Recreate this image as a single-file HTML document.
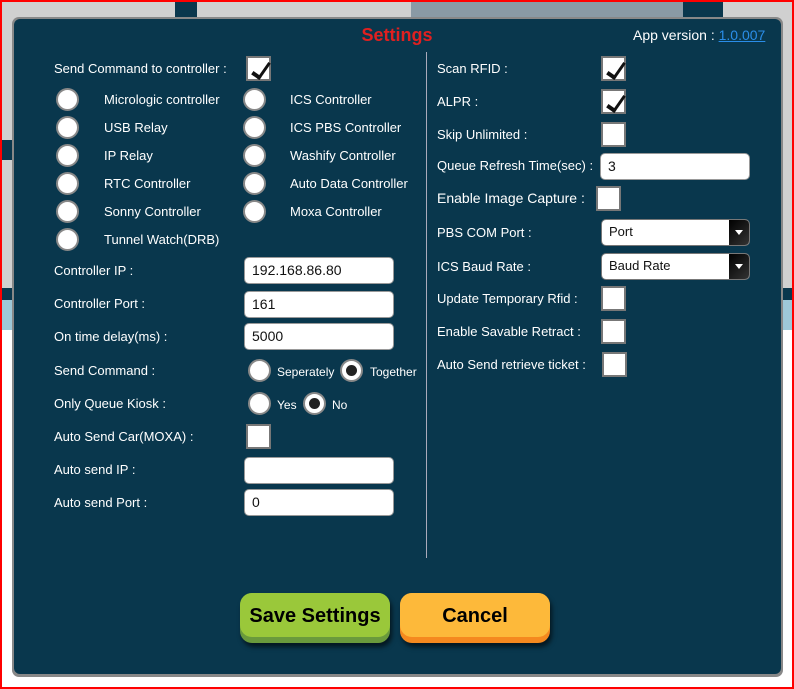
<!DOCTYPE html>
<html><head><meta charset="utf-8"><style>
*{margin:0;padding:0;box-sizing:border-box}
body{width:794px;height:689px;position:relative;overflow:hidden;background:#fff;font-family:"Liberation Sans",sans-serif;color:#fff}
.a{position:absolute}
.l{position:absolute;font-size:13px;line-height:16px;white-space:nowrap;color:#fff;transform:translateY(-7px)}
.s{font-size:12px}
.r{position:absolute;width:23px;height:23px;border-radius:50%;background:#fff;border:2px solid #888;transform:translate(-11px,-11px)}
.r.on::after{content:"";position:absolute;left:4px;top:4px;width:11px;height:11px;border-radius:50%;background:#222}
.c{position:absolute;width:25px;height:25px;background:#fff;border:2px solid #777}
.c.on::after{content:"";position:absolute;left:8px;top:1px;width:7px;height:16px;border:solid #111;border-width:0 3px 4px 0;transform:rotate(35deg)}
.i{position:absolute;background:#fff;border:1px solid #999;border-radius:5px;color:#111;font-size:14px;line-height:24px;padding-left:7px}
.sel{position:absolute;background:#fff;border:1px solid #777;border-radius:5px;color:#111;font-size:13px;line-height:24px;padding-left:7px;overflow:hidden}
.sel::after{content:"";position:absolute;right:0;top:0;width:20px;height:100%;background:linear-gradient(135deg,#000,#333)}
.sel::before{content:"";position:absolute;right:6px;top:10px;border:4px solid transparent;border-top:5px solid #fff;z-index:2}
.b{position:absolute;border-radius:12px;color:#000;font-weight:bold;font-size:20px;text-align:center;line-height:46px;box-shadow:2px 4px 5px rgba(0,0,0,.6)}
</style></head><body>
<div class="a" style="left:0;top:0;width:794px;height:689px;border:2px solid #f00;z-index:10"></div>
<div class="a" style="left:2px;top:0;width:790px;height:300px;background:#d0d0d0"></div>
<div class="a" style="left:2px;top:140px;width:12px;height:20px;background:#0a374d"></div>
<div class="a" style="left:2px;top:288px;width:790px;height:12px;background:#0a374d"></div>
<div class="a" style="left:2px;top:300px;width:790px;height:30px;background:#9ec8d8"></div>
<div class="a" style="left:2px;top:330px;width:790px;height:357px;background:#fff"></div>
<div class="a" style="left:175px;top:0;width:22px;height:18px;background:#0a374d"></div>
<div class="a" style="left:411px;top:0;width:272px;height:18px;background:#8a9aa5"></div>
<div class="a" style="left:683px;top:0;width:40px;height:18px;background:#0a374d"></div>
<div class="a" style="left:12px;top:17px;width:771px;height:660px;background:#888;border-radius:7px"></div>
<div class="a" style="left:14px;top:19px;width:767px;height:655px;background:#09374d;border-radius:6px"></div>
<div class="a" style="left:0;top:25px;width:794px;text-align:center;color:#e02020;font-weight:bold;font-size:18px">Settings</div>
<div class="a" style="left:633px;top:27px;font-size:14px">App version : <span style="color:#2a8de8;text-decoration:underline">1.0.007</span></div>
<div class="a" style="left:426px;top:52px;width:1px;height:506px;background:#aab"></div>

<div class="l" style="left:54px;top:68px">Send Command to controller :</div>
<div class="c on" style="left:246px;top:56px"></div>
<div class="r" style="left:67px;top:99px"></div><div class="l" style="left:104px;top:99px">Micrologic controller</div>
<div class="r" style="left:254px;top:99px"></div><div class="l" style="left:290px;top:99px">ICS Controller</div>
<div class="r" style="left:67px;top:127px"></div><div class="l" style="left:104px;top:127px">USB Relay</div>
<div class="r" style="left:254px;top:127px"></div><div class="l" style="left:290px;top:127px">ICS PBS Controller</div>
<div class="r" style="left:67px;top:155px"></div><div class="l" style="left:104px;top:155px">IP Relay</div>
<div class="r" style="left:254px;top:155px"></div><div class="l" style="left:290px;top:155px">Washify Controller</div>
<div class="r" style="left:67px;top:183px"></div><div class="l" style="left:104px;top:183px">RTC Controller</div>
<div class="r" style="left:254px;top:183px"></div><div class="l" style="left:290px;top:183px">Auto Data Controller</div>
<div class="r" style="left:67px;top:211px"></div><div class="l" style="left:104px;top:211px">Sonny Controller</div>
<div class="r" style="left:254px;top:211px"></div><div class="l" style="left:290px;top:211px">Moxa Controller</div>
<div class="r" style="left:67px;top:239px"></div><div class="l" style="left:104px;top:239px">Tunnel Watch(DRB)</div>

<div class="l" style="left:54px;top:270px">Controller IP :</div><div class="i" style="left:244px;top:257px;width:150px;height:27px">192.168.86.80</div>
<div class="l" style="left:54px;top:303px">Controller Port :</div><div class="i" style="left:244px;top:291px;width:150px;height:27px">161</div>
<div class="l" style="left:54px;top:336px">On time delay(ms) :</div><div class="i" style="left:244px;top:323px;width:150px;height:27px">5000</div>
<div class="l" style="left:54px;top:370px">Send Command :</div>
<div class="r" style="left:259px;top:370px"></div><div class="l s" style="left:277px;top:371px">Seperately</div>
<div class="r on" style="left:351px;top:370px"></div><div class="l s" style="left:370px;top:371px">Together</div>
<div class="l" style="left:54px;top:403px">Only Queue Kiosk :</div>
<div class="r" style="left:259px;top:403px"></div><div class="l s" style="left:277px;top:404px">Yes</div>
<div class="r on" style="left:314px;top:403px"></div><div class="l s" style="left:332px;top:404px">No</div>
<div class="l" style="left:54px;top:436px">Auto Send Car(MOXA) :</div><div class="c" style="left:246px;top:424px"></div>
<div class="l" style="left:54px;top:469px">Auto send IP :</div><div class="i" style="left:244px;top:457px;width:150px;height:27px"></div>
<div class="l" style="left:54px;top:502px">Auto send Port :</div><div class="i" style="left:244px;top:489px;width:150px;height:27px">0</div>

<div class="l" style="left:437px;top:68px">Scan RFID :</div><div class="c on" style="left:601px;top:56px"></div>
<div class="l" style="left:437px;top:101px">ALPR :</div><div class="c on" style="left:601px;top:89px"></div>
<div class="l" style="left:437px;top:134px">Skip Unlimited :</div><div class="c" style="left:601px;top:122px"></div>
<div class="l" style="left:437px;top:165px">Queue Refresh Time(sec) :</div><div class="i" style="left:600px;top:153px;width:150px;height:27px">3</div>
<div class="l" style="left:437px;top:197px;font-size:14px">Enable Image Capture :</div><div class="c" style="left:596px;top:186px"></div>
<div class="l" style="left:437px;top:232px">PBS COM Port :</div><div class="sel" style="left:601px;top:219px;width:149px;height:27px">Port</div>
<div class="l" style="left:437px;top:266px">ICS Baud Rate :</div><div class="sel" style="left:601px;top:253px;width:149px;height:27px">Baud Rate</div>
<div class="l" style="left:437px;top:298px">Update Temporary Rfid :</div><div class="c" style="left:601px;top:286px"></div>
<div class="l" style="left:437px;top:331px">Enable Savable Retract :</div><div class="c" style="left:601px;top:319px"></div>
<div class="l" style="left:437px;top:364px">Auto Send retrieve ticket :</div><div class="c" style="left:602px;top:352px"></div>

<div class="b" style="left:240px;top:593px;width:150px;height:50px;background:#6a9a3c"><div style="height:44px;background:#9ac83a;border-radius:12px;line-height:46px">Save Settings</div></div>
<div class="b" style="left:400px;top:593px;width:150px;height:50px;background:#f5891f"><div style="height:44px;background:#fdb93a;border-radius:12px;line-height:46px">Cancel</div></div>
</body></html>
